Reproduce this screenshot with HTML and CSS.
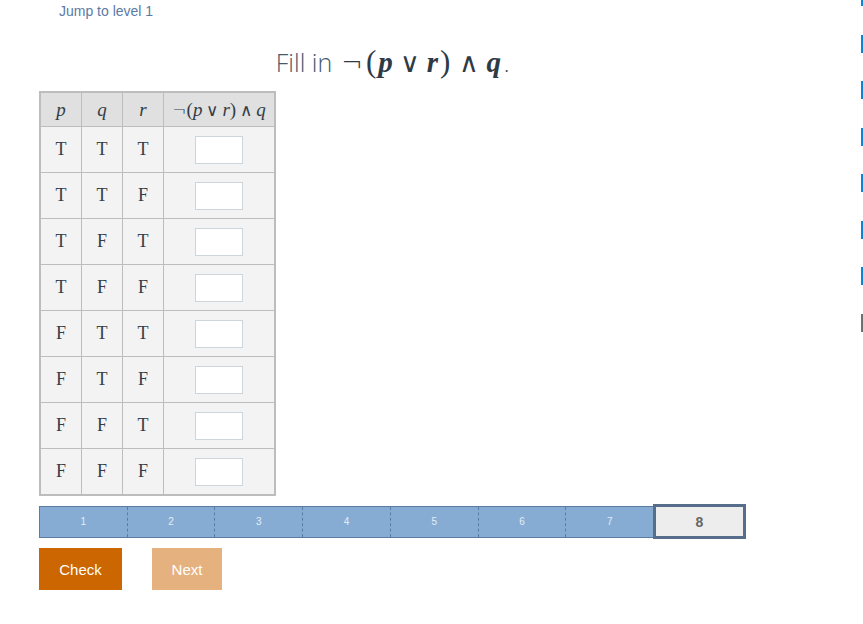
FILE: index.html
```html
<!DOCTYPE html>
<html>
<head>
<meta charset="utf-8">
<link rel="stylesheet" href="styles.css">
</head>
<body>
<div class="page">
  <div class="jump">Jump to level 1</div>
  <h1 class="title"><span class="lead">Fill in</span> <span class="math"><span class="neg">¬</span><span class="par">(</span><b>p</b><span class="op">∨</span><b>r</b><span class="par">)</span><span class="op">∧</span><b>q</b></span><span class="dot">.</span></h1>
  <table class="truth">
    <thead>
      <tr><th><i>p</i></th><th><i>q</i></th><th><i>r</i></th><th class="expr"><span class="neg">¬</span>(<i>p</i><span class="op">∨</span><i>r</i>)<span class="op">∧</span><i>q</i></th></tr>
    </thead>
    <tbody>
      <tr><td>T</td><td>T</td><td>T</td><td><input class="ans" type="text"></td></tr>
      <tr><td>T</td><td>T</td><td>F</td><td><input class="ans" type="text"></td></tr>
      <tr><td>T</td><td>F</td><td>T</td><td><input class="ans" type="text"></td></tr>
      <tr><td>T</td><td>F</td><td>F</td><td><input class="ans" type="text"></td></tr>
      <tr><td>F</td><td>T</td><td>T</td><td><input class="ans" type="text"></td></tr>
      <tr><td>F</td><td>T</td><td>F</td><td><input class="ans" type="text"></td></tr>
      <tr><td>F</td><td>F</td><td>T</td><td><input class="ans" type="text"></td></tr>
      <tr><td>F</td><td>F</td><td>F</td><td><input class="ans" type="text"></td></tr>
    </tbody>
  </table>
  <div class="progress">
    <div class="bar">
      <div class="seg">1</div><div class="seg">2</div><div class="seg">3</div><div class="seg">4</div><div class="seg">5</div><div class="seg">6</div><div class="seg">7</div>
    </div>
    <div class="current">8</div>
  </div>
  <div class="buttons">
    <button class="btn check">Check</button>
    <button class="btn next">Next</button>
  </div>
</div>
<div class="marks">
  <span class="mark"></span><span class="mark"></span><span class="mark"></span><span class="mark"></span><span class="mark"></span><span class="mark"></span><span class="mark"></span><span class="mark grey"></span>
</div>
</body>
</html>
```

FILE: styles.css
```css
html, body {
  margin: 0;
  padding: 0;
  background: #fff;
}
body {
  font-family: "Liberation Sans", Arial, sans-serif;
  overflow: hidden;
}
.page {
  width: 707px;
  margin-left: 39px;
}
.jump {
  margin-left: 20px;
  padding-top: 2px;
  font-size: 14px;
  line-height: 18px;
  color: #5b7aa6;
}
.title {
  margin: 26px 0 0 0;
  text-align: center;
  font-weight: normal;
  font-size: 25px;
  line-height: 32px;
  color: #2e3a44;
  padding-right: 0;
}
.title .lead {
  font-family: "Open Sans", sans-serif;
  font-weight: 300;
  color: #44596e;
  font-size: 25px;
  margin-right: 2px;
}
.title .math {
  font-family: "DejaVu Serif", serif;
  font-size: 26px;
}
.title .neg {
  font-family: "DejaVu Sans", sans-serif;
  font-weight: 200;
  margin-right: 1px;
}
.title .par {
  font-family: "Liberation Serif", serif;
  font-size: 31px;
  margin: 0 2px;
}
.title .op {
  font-family: "DejaVu Sans", sans-serif;
  font-weight: 200;
  font-size: 27px;
  margin: 0 7px;
}
.title .math b {
  font-style: italic;
  font-weight: bold;
  font-family: "Liberation Serif", serif;
  font-size: 29px;
}
.title .dot {
  font-family: "Open Sans", sans-serif;
  font-weight: 300;
  font-size: 22px;
  margin-left: 3px;
}
.truth {
  margin-top: 12px;
  border-collapse: collapse;
  border: 2px solid #bdbdbd;
  color: #333d47;
}
.truth th, .truth td {
  border: 1px solid #bdbdbd;
  text-align: center;
  padding: 0;
}
.truth th {
  background: #e0e0e0;
  height: 33px;
  font-family: "Liberation Serif", serif;
  font-weight: normal;
  font-size: 19px;
}
.truth th.expr {
  font-family: "Liberation Serif", serif;
  font-size: 19px;
  white-space: nowrap;
}
.truth th.expr .neg {
  font-family: "DejaVu Sans", sans-serif;
  font-weight: 200;
  font-size: 17px;
}
.truth th.expr .op {
  font-family: "DejaVu Sans", sans-serif;
  font-weight: 200;
  font-size: 17px;
  margin: 0 4px;
}
.truth td {
  background: #f3f3f3;
  height: 45px;
  width: 40px;
  font-family: "Liberation Serif", serif;
  font-size: 18px;
}
.truth td:last-child, .truth th:last-child {
  width: 110px;
}
.ans {
  display: block;
  margin: 0 auto;
  width: 48px;
  height: 28px;
  box-sizing: border-box;
  border: 1px solid #cdd6da;
  background: #fff;
  padding: 0;
}
.progress {
  display: flex;
  align-items: center;
  margin-top: 8px;
}
.bar {
  display: flex;
  width: 614px;
  height: 32px;
  box-sizing: border-box;
  border: 1px solid #5b7ca2;
  border-right: none;
  background: #87acd3;
}
.seg {
  flex: 1;
  display: flex;
  align-items: center;
  justify-content: center;
  font-size: 10px;
  color: #e4ecf5;
  border-left: 1px dashed #5b7ca2;
}
.seg:first-child {
  border-left: none;
}
.current {
  width: 93px;
  height: 35px;
  box-sizing: border-box;
  border: 3px solid #576d8c;
  background: #ededed;
  display: flex;
  align-items: center;
  justify-content: center;
  font-weight: bold;
  font-size: 14px;
  color: #666;
}
.buttons {
  display: flex;
  gap: 30px;
  margin-top: 9px;
}
.btn {
  height: 42px;
  border: none;
  color: #fff;
  font-family: "Liberation Sans", Arial, sans-serif;
  font-size: 15px;
  padding: 0;
}
.check {
  width: 83px;
  background: #cc6600;
}
.next {
  width: 70px;
  background: #e5b17f;
}
.marks {
  position: fixed;
  top: -12px;
  right: 0;
  display: flex;
  flex-direction: column;
  gap: 28.5px;
}
.mark {
  display: block;
  width: 2px;
  height: 18px;
  background: #0b84d9;
}
.mark.grey {
  background: #707070;
}
```
